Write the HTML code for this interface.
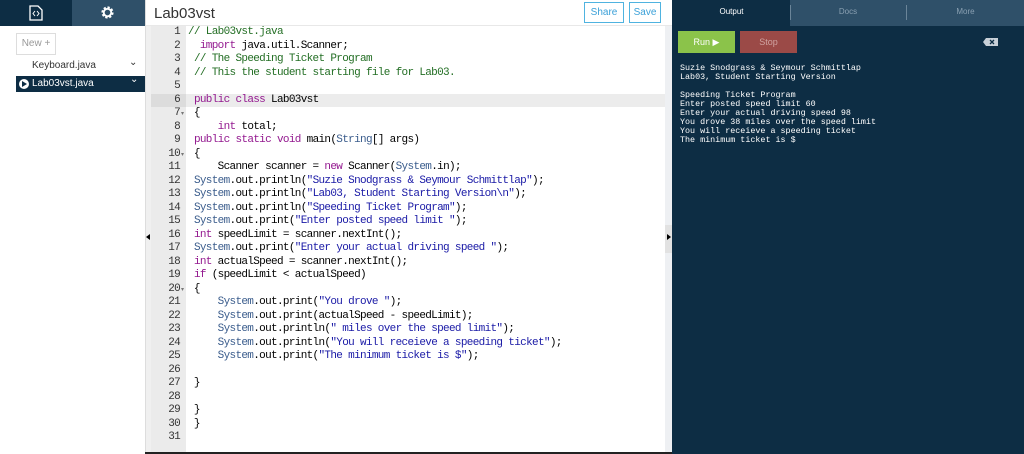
<!DOCTYPE html>
<html><head><meta charset="utf-8">
<style>
*{margin:0;padding:0;box-sizing:border-box}
body{width:1024px;height:454px;overflow:hidden;background:#fff;font-family:"Liberation Sans",sans-serif;position:relative}
.abs{position:absolute}
.code{font-family:"Liberation Mono",monospace;font-size:11px;letter-spacing:-0.67px;white-space:pre;color:#000}
.ln{position:absolute;left:150px;width:30px;text-align:right;font-family:"Liberation Mono",monospace;font-size:11px;letter-spacing:-0.7px;color:#333}
.c{color:#236e24}.k{color:#93188f}.s{color:#1a1aa6}.y{color:#3a5c8c}
.out{font-family:"Liberation Mono",monospace;font-size:8.4px;color:#fff;white-space:pre;line-height:9px;letter-spacing:0}
</style></head><body>
<!-- sidebar -->
<div class="abs" style="left:0;top:0;width:72px;height:26px;background:#0d2d44"></div>
<div class="abs" style="left:72px;top:0;width:73px;height:26px;background:#2f5069"></div>
<svg class="abs" style="left:29px;top:5px" width="14" height="16" viewBox="0 0 14 16"><path d="M1 1h8l4 4v10H1z" fill="none" stroke="#fff" stroke-width="1.3"/><path d="M6 6l-2 2.5 2 2.5M8 6l2 2.5-2 2.5" fill="none" stroke="#fff" stroke-width="1"/></svg>
<svg class="abs" style="left:100px;top:5px" width="15" height="15" viewBox="0 0 16 16"><circle cx="8" cy="8" r="5" fill="none" stroke="#fff" stroke-width="3" stroke-dasharray="2.2 1.7"/><circle cx="8" cy="8" r="4" fill="none" stroke="#fff" stroke-width="2"/></svg>
<div class="abs" style="left:16px;top:33px;width:40px;height:22px;border:1px solid #ddd;color:#999;font-size:10px;line-height:20px;text-align:center">New +</div>
<div class="abs" style="left:32px;top:60px;font-size:10px;color:#333">Keyboard.java</div>
<div class="abs" style="left:129px;top:57px;font-size:10px;color:#333">&#8964;</div>
<div class="abs" style="left:16px;top:76px;width:129px;height:16px;background:#0d2d44"></div>
<div class="abs" style="left:19px;top:79px;width:10px;height:10px;border-radius:50%;background:#fff"></div>
<div class="abs" style="left:22px;top:81px;width:0;height:0;border-left:5px solid #0d2d44;border-top:3px solid transparent;border-bottom:3px solid transparent"></div>
<div class="abs" style="left:32px;top:78px;font-size:10px;color:#fff">Lab03vst.java</div>
<div class="abs" style="left:130px;top:74px;font-size:10px;color:#fff">&#8964;</div>
<!-- editor -->
<div class="abs" style="left:145px;top:0;width:527px;height:26px;background:#fff;border-bottom:1px solid #e8e8e8"></div>
<div class="abs" style="left:145px;top:0;width:1px;height:454px;background:#ddd"></div>
<div class="abs" style="left:154px;top:5px;font-size:15px;color:#333">Lab03vst</div>
<div class="abs" style="left:584px;top:2px;width:40px;height:21px;border:1px solid #4fb3e0;color:#3aa0d8;font-size:10px;line-height:19px;text-align:center">Share</div>
<div class="abs" style="left:629px;top:2px;width:32px;height:21px;border:1px solid #4fb3e0;color:#3aa0d8;font-size:10px;line-height:19px;text-align:center">Save</div>
<div class="abs" style="left:146px;top:26px;width:5px;height:428px;background:#f0f0f0"></div>
<div class="abs" style="left:146px;top:234px;border-right:4px solid #000;border-top:3px solid transparent;border-bottom:3px solid transparent"></div>
<div class="abs" style="left:151px;top:26px;width:35px;height:428px;background:#ebebeb"></div>
<div class="abs" style="left:151px;top:94px;width:35px;height:13px;background:#dcdcdc"></div>
<div class="abs" style="left:186px;top:94px;width:479px;height:13px;background:#ececec"></div>
<div class="abs" style="left:665px;top:26px;width:7px;height:428px;background:#eef0f3"></div>
<div class="abs" style="left:665px;top:225px;width:7px;height:28px;background:#e2e2e2"></div>
<div class="abs" style="left:667px;top:234px;border-left:4px solid #000;border-top:3px solid transparent;border-bottom:3px solid transparent"></div>
<div class="abs" style="left:145px;top:452px;width:527px;height:2px;background:#222"></div>
<div id="ed"></div>
<!-- right panel -->
<div class="abs" style="left:672px;top:0;width:352px;height:454px;background:#0d2d44"></div>
<div class="abs" style="left:790px;top:0;width:234px;height:26px;background:#2f5069"></div>
<div class="abs" style="left:790px;top:5px;width:1px;height:15px;background:#6b8599"></div>
<div class="abs" style="left:906px;top:5px;width:1px;height:15px;background:#6b8599"></div>
<div class="abs" style="left:673px;top:7px;width:117px;text-align:center;color:#fff;font-size:8px">Output</div>
<div class="abs" style="left:790px;top:7px;width:116px;text-align:center;color:#8aa0b2;font-size:8px">Docs</div>
<div class="abs" style="left:907px;top:7px;width:117px;text-align:center;color:#8aa0b2;font-size:8px">More</div>
<div class="abs" style="left:678px;top:31px;width:57px;height:22px;background:#8bc34a;color:#fff;font-size:9px;line-height:22px;text-align:center">Run &#9654;</div>
<div class="abs" style="left:740px;top:31px;width:57px;height:22px;background:#9b4a47;color:#d0a3a1;font-size:9px;line-height:22px;text-align:center">Stop</div>
<svg class="abs" style="left:983px;top:38px" width="15" height="8" viewBox="0 0 15 8"><path d="M0 4L3 0H15V8H3Z" fill="#c8d0d8"/><path d="M7 2l4 4M11 2l-4 4" stroke="#0d2d44" stroke-width="1.3"/></svg>
<div class="abs out" style="left:680px;top:64px">Suzie Snodgrass &amp; Seymour Schmittlap
Lab03, Student Starting Version

Speeding Ticket Program
Enter posted speed limit 60
Enter your actual driving speed 98
You drove 38 miles over the speed limit
You will receieve a speeding ticket
The minimum ticket is $</div>
<script>
var L=[
'<span class="c">// Lab03vst.java</span>',
'  <span class="k">import</span> java.util.Scanner;',
' <span class="c">// The Speeding Ticket Program</span>',
' <span class="c">// This the student starting file for Lab03.</span>',
'',
' <span class="k">public class</span> Lab03vst',
' {',
'     <span class="k">int</span> total;',
' <span class="k">public static void</span> main(<span class="y">String</span>[] args)',
' {',
'     Scanner scanner = <span class="k">new</span> Scanner(<span class="y">System</span>.in);',
' <span class="y">System</span>.out.println(<span class="s">"Suzie Snodgrass &amp; Seymour Schmittlap"</span>);',
' <span class="y">System</span>.out.println(<span class="s">"Lab03, Student Starting Version\\n"</span>);',
' <span class="y">System</span>.out.println(<span class="s">"Speeding Ticket Program"</span>);',
' <span class="y">System</span>.out.print(<span class="s">"Enter posted speed limit "</span>);',
' <span class="k">int</span> speedLimit = scanner.nextInt();',
' <span class="y">System</span>.out.print(<span class="s">"Enter your actual driving speed "</span>);',
' <span class="k">int</span> actualSpeed = scanner.nextInt();',
' <span class="k">if</span> (speedLimit &lt; actualSpeed)',
' {',
'     <span class="y">System</span>.out.print(<span class="s">"You drove "</span>);',
'     <span class="y">System</span>.out.print(actualSpeed - speedLimit);',
'     <span class="y">System</span>.out.println(<span class="s">" miles over the speed limit"</span>);',
'     <span class="y">System</span>.out.println(<span class="s">"You will receieve a speeding ticket"</span>);',
'     <span class="y">System</span>.out.print(<span class="s">"The minimum ticket is $"</span>);',
'',
' }',
'',
' }',
' }',
''];
var h='',fold={7:1,10:1,20:1};
for(var i=0;i<L.length;i++){var t=26+i*13.5;
h+='<div class="ln" style="top:'+t+'px;line-height:13.5px">'+(i+1)+'</div>';
if(fold[i+1])h+='<div class="abs" style="left:181px;top:'+(t+1)+'px;font-size:6px;color:#777;line-height:13.5px">&#9662;</div>';
h+='<div class="abs code" style="left:188px;top:'+t+'px;line-height:13.5px">'+L[i]+'</div>';}
document.getElementById('ed').innerHTML=h;
</script>
</body></html>
